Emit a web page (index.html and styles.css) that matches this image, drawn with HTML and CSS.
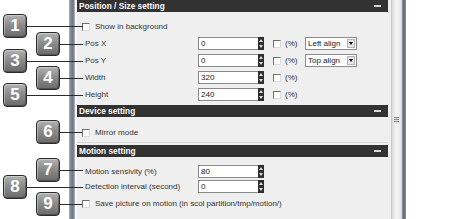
FILE: index.html
```html
<!DOCTYPE html>
<html>
<head>
<meta charset="utf-8">
<link rel="stylesheet" href="styles.css">
</head>
<body>
<div class="page">
  <div class="gutter"></div>
  <div class="winbar"></div>
  <div class="panel">
    <div class="hdr"><span>Position / Size setting</span><i class="minus"></i></div>
    <div class="body s1">
      <div class="row cbrow"><span class="cb"></span><span class="cbl">Show in background</span></div>
      <div class="row">
        <span class="lbl">Pos X</span>
        <span class="spin"><span class="inp">0</span><span class="btns"><i class="up"></i><i class="dn"></i></span></span>
        <span class="cb pc"></span><span class="pct">(%)</span>
        <span class="sel"><span class="sv">Left align</span><span class="sb"><i></i></span></span>
      </div>
      <div class="row">
        <span class="lbl">Pos Y</span>
        <span class="spin"><span class="inp">0</span><span class="btns"><i class="up"></i><i class="dn"></i></span></span>
        <span class="cb pc"></span><span class="pct">(%)</span>
        <span class="sel"><span class="sv">Top align</span><span class="sb"><i></i></span></span>
      </div>
      <div class="row">
        <span class="lbl">Width</span>
        <span class="spin"><span class="inp">320</span><span class="btns"><i class="up"></i><i class="dn"></i></span></span>
        <span class="cb pc"></span><span class="pct">(%)</span>
      </div>
      <div class="row">
        <span class="lbl">Height</span>
        <span class="spin"><span class="inp">240</span><span class="btns"><i class="up"></i><i class="dn"></i></span></span>
        <span class="cb pc"></span><span class="pct">(%)</span>
      </div>
    </div>
    <div class="hdr"><span>Device setting</span><i class="minus"></i></div>
    <div class="body s2">
      <div class="row cbrow"><span class="cb"></span><span class="cbl">Mirror mode</span></div>
    </div>
    <div class="hdr h3"><span>Motion setting</span><i class="minus"></i></div>
    <div class="body s3">
      <div class="row">
        <span class="lbl">Motion sensivity (%)</span>
        <span class="spin"><span class="inp">80</span><span class="btns"><i class="up"></i><i class="dn"></i></span></span>
      </div>
      <div class="row">
        <span class="lbl">Detection interval (second)</span>
        <span class="spin"><span class="inp">0</span><span class="btns"><i class="up"></i><i class="dn"></i></span></span>
      </div>
      <div class="row cbrow last"><span class="cb"></span><span class="cbl">Save picture on motion (in scol partition/tmp/motion/)</span></div>
    </div>
  </div>
  <div class="scroll"><i class="grip"></i></div>
  <div class="edge"></div>
  <div class="rest"></div>

  <div class="callouts">
    <div class="co c1"><span class="badge">1</span><span class="lead"></span></div>
    <div class="co c2"><span class="badge">2</span><span class="lead"></span></div>
    <div class="co c3"><span class="badge">3</span><span class="lead"></span></div>
    <div class="co c4"><span class="badge">4</span><span class="lead"></span></div>
    <div class="co c5"><span class="badge">5</span><span class="lead"></span></div>
    <div class="co c6"><span class="badge">6</span><span class="lead"></span></div>
    <div class="co c7"><span class="badge">7</span><span class="lead"></span></div>
    <div class="co c8"><span class="badge">8</span><span class="lead"></span></div>
    <div class="co c9"><span class="badge">9</span><span class="lead"></span></div>
  </div>
</div>
</body>
</html>
```
FILE: styles.css
```css
html, body {
  margin: 0;
  padding: 0;
  background: #ffffff;
}
body {
  font-family: "Liberation Sans", Arial, sans-serif;
  font-size: 8px;
  color: #333;
}
.page {
  position: relative;
  display: flex;
  width: 474px;
  height: 219px;
  overflow: hidden;
}
.gutter { width: 69px; flex: none; }
.winbar {
  width: 6px;
  flex: none;
  background: linear-gradient(to right, #a7adb5 0, #7c8491 35%, #6f7784 70%, #b9bec5 100%);
}
.panel {
  width: 311px;
  flex: none;
  background: #efefef;
  border-left: 2px solid #f7f7f7;
  border-right: 1px solid #c9c9c9;
  padding-right: 3px;
  display: flex;
  flex-direction: column;
}
.hdr {
  height: 12px;
  background: #323232;
  color: #fff;
  font-weight: bold;
  font-size: 8.3px;
  line-height: 12px;
  padding-left: 2px;
  display: flex;
  align-items: center;
  justify-content: space-between;
}
.hdr.h3 { margin-top: 2px; }
.minus {
  width: 7px;
  height: 2px;
  background: #d8d8d8;
  margin-right: 7px;
}
.body {
  display: flex;
  flex-direction: column;
  gap: 4px;
  padding-left: 5px;
}
.s1 { padding-top: 8px; padding-bottom: 4px; height: 81px; box-sizing: content-box; }
.s2 { padding-top: 9px; padding-bottom: 3px; border-bottom: 1px solid #d6d6d6; }
.s3 { padding-top: 8px; gap: 2px; }
.s3 .last { margin-top: 2px; }
.row {
  display: flex;
  align-items: center;
  height: 13px;
  white-space: nowrap;
}
.lbl {
  width: 113px;
  margin-left: 3px;
  flex: none;
}
.cb {
  width: 6px;
  height: 6px;
  flex: none;
  background: #fff;
  border-top: 1px solid #6f6f6f;
  border-left: 1px solid #6f6f6f;
  border-right: 1px solid #dcdcdc;
  border-bottom: 1px solid #dcdcdc;
}
.cbl { margin-left: 5px; }
.spin {
  display: flex;
  height: 13px;
  flex: none;
}
.inp {
  width: 57px;
  height: 11px;
  background: #fff;
  border: 1px solid #8a8a8a;
  border-right: none;
  padding-left: 2px;
  line-height: 11px;
  font-size: 8px;
  color: #222;
}
.btns {
  width: 6px;
  height: 13px;
  background: #2e2e2e;
  display: flex;
  flex-direction: column;
  justify-content: space-between;
  align-items: center;
  padding: 2px 0;
  box-sizing: border-box;
}
.btns i {
  width: 0;
  height: 0;
  border-left: 2px solid transparent;
  border-right: 2px solid transparent;
}
.btns .up { border-bottom: 3px solid #e0e0e0; }
.btns .dn { border-top: 3px solid #e0e0e0; }
.pc { margin-left: 9px; }
.pct { margin-left: 4px; width: 16px; }
.sel {
  margin-left: 4px;
  width: 50px;
  height: 11px;
  background: #fff;
  border: 1px solid #8a8a8a;
  display: flex;
  align-items: center;
  justify-content: space-between;
}
.sv { padding-left: 2px; line-height: 11px; color: #222; }
.sb {
  width: 8px;
  height: 9px;
  margin-right: 1px;
  background: #e6e6e6;
  border: 1px solid #b5b5b5;
  box-sizing: border-box;
  display: flex;
  align-items: center;
  justify-content: center;
}
.sb i {
  width: 0;
  height: 0;
  border-left: 2px solid transparent;
  border-right: 2px solid transparent;
  border-top: 3px solid #111;
}
.scroll {
  width: 10px;
  flex: none;
  position: relative;
  background: linear-gradient(to right, #dadada 0, #f5f5f5 40%, #ececec 80%, #d2d4d8 100%);
}
.grip {
  position: absolute;
  left: 2px;
  top: 117px;
  width: 5px;
  height: 6px;
  background: repeating-linear-gradient(to bottom, #8a8a8a 0, #8a8a8a 1px, #e0e0e0 1px, #e0e0e0 2px);
}
.edge {
  width: 4px;
  flex: none;
  background: linear-gradient(to right, #8d95a1 0, #5f6774 50%, #8990a0 100%);
}
.rest { flex: 1; background: #fff; }

/* annotation callouts overlaid on the screenshot */
.callouts {
  position: absolute;
  left: 0;
  top: 0;
  width: 474px;
  height: 219px;
  pointer-events: none;
}
.co {
  position: absolute;
  display: flex;
  align-items: center;
  height: 24px;
}
.badge {
  width: 22px;
  height: 22px;
  border: 1px solid #2b2b2b;
  border-radius: 4px;
  background: linear-gradient(to bottom, #b2b2b2 0, #8c8c8c 45%, #6a6a6a 100%);
  box-shadow: inset 1px 1px 0 rgba(255,255,255,0.35), inset -1px -1px 0 rgba(0,0,0,0.25);
  color: #fff;
  font-weight: bold;
  font-size: 17px;
  line-height: 22px;
  text-align: center;
  flex: none;
}
.lead {
  height: 1px;
  background: #2b2b2b;
}
.c1, .c3, .c5, .c8 { left: 3px; }
.c2, .c4, .c6, .c7, .c9 { left: 36px; }
.c1 .lead, .c3 .lead, .c5 .lead, .c8 .lead { width: 56px; }
.c2 .lead, .c4 .lead, .c7 .lead { width: 23px; }
.c6 .lead, .c9 .lead { width: 22px; }
.c1 { top: 14px; }
.c2 { top: 32px; }
.c3 { top: 49px; }
.c4 { top: 66px; }
.c5 { top: 83px; }
.c6 { top: 120px; }
.c7 { top: 158px; }
.c8 { top: 175px; }
.c9 { top: 192px; }
```
